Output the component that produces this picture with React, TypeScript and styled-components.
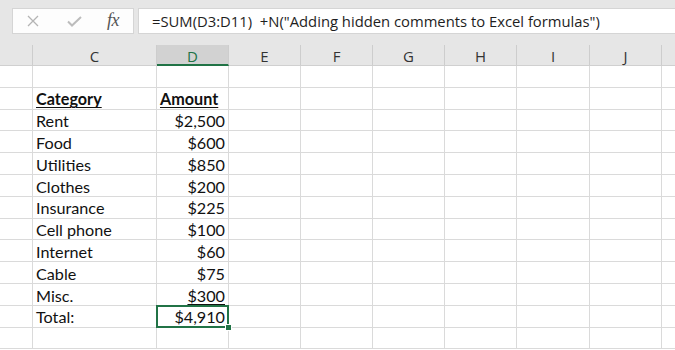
import styled, { createGlobalStyle } from "styled-components";

const GlobalStyle = createGlobalStyle`
  html, body {
    margin: 0;
    padding: 0;
    background: #ffffff;
    overflow: hidden;
  }
`;

const Sheet = styled.div`
  width: 675px;
  height: 350px;
  overflow: hidden;
  background: #ffffff;
`;

const Toolbar = styled.div`
  height: 45px;
  box-sizing: border-box;
  background: #e6e6e6;
  padding: 8px 0 0 12px;
  display: flex;
  align-items: flex-start;
  gap: 4px;
`;

const ButtonsBox = styled.div`
  width: 122px;
  height: 26px;
  box-sizing: border-box;
  background: #fdfdfd;
  border: 1px solid #d5d5d5;
  display: flex;
  align-items: center;
  padding-left: 14px;
`;

const IconSlot = styled.span<{ $w: number }>`
  width: ${(p) => p.$w}px;
  display: flex;
  align-items: center;
  justify-content: flex-start;
`;

const Fx = styled.span`
  font-family: "Liberation Serif", serif;
  font-style: italic;
  font-size: 18px;
  color: #555555;
  letter-spacing: -0.5px;
  margin-top: -2px;
`;

const FormulaInput = styled.div`
  flex: 1;
  height: 26px;
  box-sizing: border-box;
  background: #ffffff;
  border: 1px solid #d5d5d5;
  border-right: none;
  padding-left: 13px;
  display: flex;
  align-items: center;
  font-family: "Open Sans", "Noto Sans", sans-serif;
  font-size: 14.8px;
  color: #1e1e1e;
  white-space: pre;
`;

const Grid = styled.div<{ $cols: string }>`
  display: grid;
  grid-template-columns: ${(p) => p.$cols};
  grid-template-rows: 21px;
  grid-auto-rows: 21.8px;
`;

const HeadCell = styled.div<{ $active?: boolean }>`
  box-sizing: border-box;
  background: ${(p) => (p.$active ? "#d2d2d2" : "#e6e6e6")};
  border-right: 1px solid #cdcdcd;
  border-bottom: ${(p) => (p.$active ? "2px solid #217346" : "1px solid #d0d0d0")};
  color: ${(p) => (p.$active ? "#217346" : "#333333")};
  font-family: "Open Sans", "Noto Sans", sans-serif;
  font-size: 15px;
  display: flex;
  align-items: center;
  justify-content: center;
  padding-top: 2px;
`;

const Cell = styled.div<{
  $right?: boolean;
  $bold?: boolean;
  $underline?: boolean;
  $selected?: boolean;
}>`
  position: relative;
  box-sizing: border-box;
  border-right: 1px solid #dadada;
  border-bottom: 1px solid #dadada;
  font-family: "Lato", "Liberation Sans", sans-serif;
  font-size: 16.2px;
  font-weight: ${(p) => (p.$bold ? 700 : 400)};
  text-decoration: ${(p) => (p.$underline ? "underline" : "none")};
  text-underline-offset: 2px;
  color: #111;
  display: flex;
  align-items: flex-end;
  justify-content: ${(p) => (p.$right ? "flex-end" : "flex-start")};
  padding: 0 3px 1px 3px;
  line-height: 1;
  white-space: nowrap;
  ${(p) =>
    p.$selected &&
    `
    outline: 2px solid #217346;
    outline-offset: -2px;
    margin: -1px 0 0 -1px;
    z-index: 1;
  `}
`;

const FillHandle = styled.span`
  position: absolute;
  right: -4px;
  bottom: -4px;
  width: 5px;
  height: 5px;
  background: #217346;
  border: 1px solid #ffffff;
`;

const widths = [33, 124, 72, 72, 72, 72, 72, 73, 72, 72];
const letters = ["", "C", "D", "E", "F", "G", "H", "I", "J", ""];

type Row = {
  label: string;
  amount: string;
  head?: boolean;
  underline?: boolean;
  selected?: boolean;
};

const rows: Row[] = [
  { label: "", amount: "" },
  { label: "Category", amount: "Amount", head: true },
  { label: "Rent", amount: "$2,500" },
  { label: "Food", amount: "$600" },
  { label: "Utilities", amount: "$850" },
  { label: "Clothes", amount: "$200" },
  { label: "Insurance", amount: "$225" },
  { label: "Cell phone", amount: "$100" },
  { label: "Internet", amount: "$60" },
  { label: "Cable", amount: "$75" },
  { label: "Misc.", amount: "$300", underline: true },
  { label: "Total:", amount: "$4,910", selected: true },
  { label: "", amount: "" },
];

function App() {
  const cols = widths.map((w) => `${w}px`).join(" ");

  return (
    <Sheet>
      <GlobalStyle />
      <Toolbar>
        <ButtonsBox>
          <IconSlot $w={40}>
            <svg width="12" height="12" viewBox="0 0 12 12">
              <path d="M1 1 L11 11 M11 1 L1 11" stroke="#b4b4b4" strokeWidth="1.3" fill="none" />
            </svg>
          </IconSlot>
          <IconSlot $w={40}>
            <svg width="15" height="11" viewBox="0 0 15 11">
              <path d="M1 5.5 L5 9.5 L14 1" stroke="#bcbcbc" strokeWidth="2" fill="none" />
            </svg>
          </IconSlot>
          <Fx>fx</Fx>
        </ButtonsBox>
        <FormulaInput>
          {'=SUM(D3:D11)  +N("Adding hidden comments to Excel formulas")'}
        </FormulaInput>
      </Toolbar>
      <Grid $cols={cols}>
        {letters.map((l, i) => (
          <HeadCell key={"h" + i} $active={l === "D"}>
            {l}
          </HeadCell>
        ))}
        {rows.map((r, ri) =>
          widths.map((_, ci) => {
            if (ci === 1)
              return (
                <Cell key={ri + "-" + ci} $bold={r.head} $underline={r.head}>
                  {r.label}
                </Cell>
              );
            if (ci === 2)
              return (
                <Cell
                  key={ri + "-" + ci}
                  $right={!r.head}
                  $bold={r.head}
                  $underline={r.head || r.underline}
                  $selected={r.selected}
                >
                  {r.amount}
                  {r.selected && <FillHandle />}
                </Cell>
              );
            return <Cell key={ri + "-" + ci} />;
          })
        )}
      </Grid>
    </Sheet>
  );
}

export default App;
